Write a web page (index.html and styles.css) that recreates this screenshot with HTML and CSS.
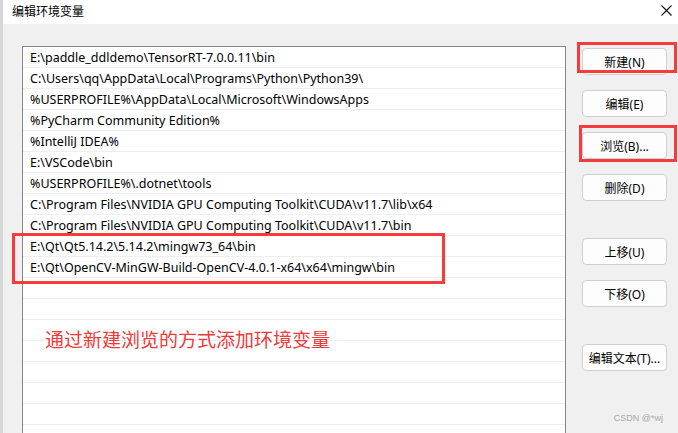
FILE: index.html
```html
<!DOCTYPE html>
<html lang="zh-CN">
<head>
<meta charset="utf-8">
<title>编辑环境变量</title>
<link rel="stylesheet" href="styles.css">
</head>
<body>
<div class="window">
  <div class="titlebar">
    <span class="title">编辑环境变量</span>
    <svg class="close" width="11" height="11" viewBox="0 0 11 11"><path d="M0.5 0.5 L10.5 10.5 M10.5 0.5 L0.5 10.5" stroke="#111" stroke-width="1.1" fill="none"/></svg>
  </div>
  <div class="content">
    <div class="listwrap">
      <div class="listbox">
        <div class="row">E:\paddle_ddldemo\TensorRT-7.0.0.11\bin</div>
        <div class="row">C:\Users\qq\AppData\Local\Programs\Python\Python39\</div>
        <div class="row">%USERPROFILE%\AppData\Local\Microsoft\WindowsApps</div>
        <div class="row">%PyCharm Community Edition%</div>
        <div class="row">%IntelliJ IDEA%</div>
        <div class="row">E:\VSCode\bin</div>
        <div class="row">%USERPROFILE%\.dotnet\tools</div>
        <div class="row">C:\Program Files\NVIDIA GPU Computing Toolkit\CUDA\v11.7\lib\x64</div>
        <div class="row">C:\Program Files\NVIDIA GPU Computing Toolkit\CUDA\v11.7\bin</div>
        <div class="row">E:\Qt\Qt5.14.2\5.14.2\mingw73_64\bin</div>
        <div class="row">E:\Qt\OpenCV-MinGW-Build-OpenCV-4.0.1-x64\x64\mingw\bin</div>
        <div class="row"></div>
        <div class="row"></div>
        <div class="row"></div>
        <div class="row"></div>
        <div class="row"></div>
        <div class="row"></div>
        <div class="row"></div>
        <div class="row"></div>
      </div>
      <div class="mark mark-rows"></div>
      <div class="note">通过新建浏览的方式添加环境变量</div>
    </div>
    <div class="buttons">
      <div class="btnwrap"><button class="btn">新建(N)</button><div class="mark mark-new"></div></div>
      <div class="btnwrap"><button class="btn">编辑(E)</button></div>
      <div class="btnwrap"><button class="btn">浏览(B)...</button><div class="mark mark-browse"></div></div>
      <div class="btnwrap"><button class="btn">删除(D)</button></div>
      <div class="btnwrap group"><button class="btn">上移(U)</button></div>
      <div class="btnwrap"><button class="btn">下移(O)</button></div>
      <div class="btnwrap group"><button class="btn">编辑文本(T)...</button></div>
    </div>
  </div>
  <div class="watermark">CSDN @*wj</div>
</div>
</body>
</html>
```

FILE: styles.css
```css
html, body {
  margin: 0;
  padding: 0;
  width: 678px;
  height: 433px;
  overflow: hidden;
  background: #f0f0f0;
  font-family: "Noto Sans", "Noto Sans CJK SC", sans-serif;
  font-size: 12px;
  color: #000;
}

.window {
  position: relative;
  width: 678px;
  height: 433px;
  display: flex;
  flex-direction: column;
  border-left: 3px solid #d6d6d6;
  box-sizing: border-box;
  overflow: hidden;
}

.titlebar {
  height: 24px;
  flex: none;
  background: #fff;
  display: flex;
  align-items: center;
  justify-content: space-between;
  padding: 0 6px 4px 9px;
  box-sizing: border-box;
}

.title {
  font-size: 12px;
  font-family: "Noto Sans CJK SC", sans-serif;
}

.close {
  display: block;
}

.content {
  flex: 1;
  display: flex;
  padding: 22px 0 0 19px;
  gap: 16px;
  min-height: 0;
}

.listwrap {
  position: relative;
  width: 544px;
  flex: none;
  display: flex;
  flex-direction: column;
}

.listbox {
  flex: 1;
  min-height: 0;
  background: #fff;
  border: 1px solid #868686;
  border-bottom: none;
  overflow: hidden;
  box-sizing: border-box;
}

.row {
  height: 21px;
  line-height: 19px;
  padding-top: 1px;
  border-bottom: 1px solid #eeeeee;
  box-sizing: border-box;
  padding-left: 7px;
  white-space: nowrap;
  font-size: 12.5px;
}

.mark {
  position: absolute;
  border: 3px solid #f53b3b;
  box-sizing: border-box;
  pointer-events: none;
}

.mark-rows {
  left: -10px;
  top: 187px;
  width: 433px;
  height: 51px;
}

.note {
  position: absolute;
  left: 23px;
  top: 282px;
  font-family: "Noto Sans CJK SC", sans-serif;
  font-size: 19px;
  line-height: 22px;
  color: #f03a3a;
  white-space: nowrap;
}

.buttons {
  display: flex;
  flex-direction: column;
  gap: 15px;
  padding-top: 2px;
}

.btnwrap {
  position: relative;
  width: 85px;
  height: 27px;
  flex: none;
}

.btnwrap.group {
  margin-top: 22px;
}

.btn {
  width: 85px;
  height: 27px;
  background: #fdfdfd;
  border: 1px solid #d0d0d0;
  border-radius: 4px;
  font-family: "Noto Sans", "Noto Sans CJK SC", sans-serif;
  font-size: 12px;
  color: #000;
  padding: 0;
  box-sizing: border-box;
}

.mark-new {
  left: -5px;
  top: -6px;
  right: -10px;
  bottom: 2px;
}

.mark-browse {
  left: -3px;
  top: -7px;
  right: -10px;
  bottom: -3px;
}

.watermark {
  position: absolute;
  right: 15px;
  bottom: 10px;
  font-family: "Liberation Sans", sans-serif;
  font-size: 9px;
  color: #a8a8a8;
}
```
